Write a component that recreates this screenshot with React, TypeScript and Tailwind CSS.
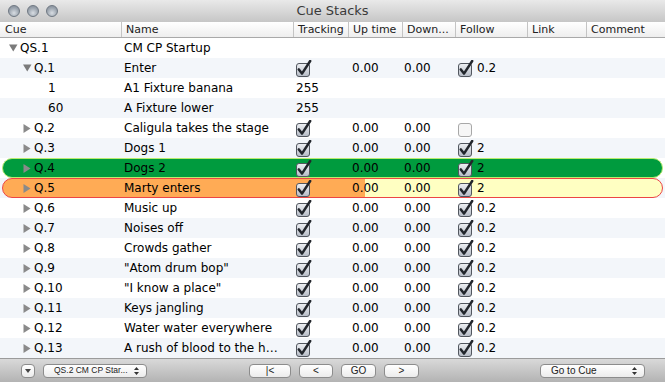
import React from 'react';

type Row = {
  cue: string;
  level: number;
  tri?: 'down' | 'right';
  name: string;
  track?: boolean;
  trackText?: string;
  up?: string;
  down?: string;
  follow?: boolean;
  followVal?: string;
  state?: 'go' | 'next';
};

const rows: Row[] = [
  { cue: 'QS.1', level: 0, tri: 'down', name: 'CM CP Startup' },
  { cue: 'Q.1', level: 1, tri: 'down', name: 'Enter', track: true, up: '0.00', down: '0.00', follow: true, followVal: '0.2' },
  { cue: '1', level: 2, name: 'A1 Fixture banana', trackText: '255' },
  { cue: '60', level: 2, name: 'A Fixture lower', trackText: '255' },
  { cue: 'Q.2', level: 1, tri: 'right', name: 'Caligula takes the stage', track: true, up: '0.00', down: '0.00', follow: false },
  { cue: 'Q.3', level: 1, tri: 'right', name: 'Dogs 1', track: true, up: '0.00', down: '0.00', follow: true, followVal: '2' },
  { cue: 'Q.4', level: 1, tri: 'right', name: 'Dogs 2', track: true, up: '0.00', down: '0.00', follow: true, followVal: '2', state: 'go' },
  { cue: 'Q.5', level: 1, tri: 'right', name: 'Marty enters', track: true, up: '0.00', down: '0.00', follow: true, followVal: '2', state: 'next' },
  { cue: 'Q.6', level: 1, tri: 'right', name: 'Music up', track: true, up: '0.00', down: '0.00', follow: true, followVal: '0.2' },
  { cue: 'Q.7', level: 1, tri: 'right', name: 'Noises off', track: true, up: '0.00', down: '0.00', follow: true, followVal: '0.2' },
  { cue: 'Q.8', level: 1, tri: 'right', name: 'Crowds gather', track: true, up: '0.00', down: '0.00', follow: true, followVal: '0.2' },
  { cue: 'Q.9', level: 1, tri: 'right', name: '"Atom drum bop"', track: true, up: '0.00', down: '0.00', follow: true, followVal: '0.2' },
  { cue: 'Q.10', level: 1, tri: 'right', name: '"I know a place"', track: true, up: '0.00', down: '0.00', follow: true, followVal: '0.2' },
  { cue: 'Q.11', level: 1, tri: 'right', name: 'Keys jangling', track: true, up: '0.00', down: '0.00', follow: true, followVal: '0.2' },
  { cue: 'Q.12', level: 1, tri: 'right', name: 'Water water everywhere', track: true, up: '0.00', down: '0.00', follow: true, followVal: '0.2' },
  { cue: 'Q.13', level: 1, tri: 'right', name: 'A rush of blood to the h…', track: true, up: '0.00', down: '0.00', follow: true, followVal: '0.2' },
];

const cols = 'grid grid-cols-[118px_172px_55px_54px_53px_72px_59px_1fr]';

const Check = ({ on }: { on: boolean }) => (
  <svg width="17" height="17" viewBox="0 0 17 17" className="shrink-0">
    <defs>
      <linearGradient id="cbg" x1="0" y1="0" x2="0" y2="1">
        <stop offset="0" stopColor="#eef0f3" />
        <stop offset="0.5" stopColor="#d3d7de" />
        <stop offset="1" stopColor="#b4bac4" />
      </linearGradient>
    </defs>
    <rect x="1.5" y="3.5" width="13" height="13" rx="2.5" fill={on ? 'url(#cbg)' : '#f6f6f6'} stroke={on ? '#51565e' : '#a8a8a8'} />
    {on && <path d="M3.8 9.4 L7 13.6 L15.2 1" fill="none" stroke="#22262c" strokeWidth="2.5" strokeLinecap="round" strokeLinejoin="round" />}
  </svg>
);

const Tri = ({ dir }: { dir: 'down' | 'right' }) =>
  dir === 'down' ? (
    <svg width="9" height="8" viewBox="0 0 9 8"><path d="M0 0.5 H8.5 L4.25 7.5 Z" fill="#7b7b7b" /></svg>
  ) : (
    <svg width="8" height="9" viewBox="0 0 8 9"><path d="M0.5 0 V9 L7.5 4.5 Z" fill="#8a8a8a" /></svg>
  );

const Btn = ({ label, w }: { label: string; w: string }) => (
  <div className={`${w} h-[14px] rounded-[4px] border border-[#8c8c8c] bg-[linear-gradient(#ffffff,#ececec)] flex items-center justify-center text-[10px] leading-none text-[#222]`}>
    {label}
  </div>
);

const Popup = ({ label, w, size }: { label: string; w: string; size: string }) => (
  <div className={`${w} ${size} h-[14px] rounded-[4px] border border-[#8c8c8c] bg-[linear-gradient(#ffffff,#ececec)] flex items-center justify-between pl-[10px] pr-[7px] leading-none text-[#222]`}>
    <span className="whitespace-nowrap">{label}</span>
    <svg width="5" height="8" viewBox="0 0 5 8" className="shrink-0"><path d="M0 3 L2.5 0 L5 3 Z M0 5 L2.5 8 L5 5 Z" fill="#333" /></svg>
  </div>
);

const Light = () => (
  <div className="w-[12px] h-[12px] rounded-full border border-[#6e7782] bg-[radial-gradient(circle_at_50%_70%,#d8dde3,#9aa3ad_60%,#7f8893)]" />
);

export default function App() {
  return (
    <div className="w-[665px] h-[382px] flex flex-col bg-white overflow-hidden text-black" style={{ fontFamily: '"DejaVu Sans", sans-serif' }}>
      {/* Title bar */}
      <div className="h-[22px] shrink-0 bg-[linear-gradient(#e9e9e9,#c6c6c6)] flex items-center relative">
        <div className="flex gap-[7px] pl-[8px]">
          <Light />
          <Light />
          <Light />
        </div>
        <div className="absolute inset-0 flex items-center justify-center text-[13px] text-[#3a3a3a]">Cue Stacks</div>
      </div>

      {/* Column header */}
      <div className="h-[16px] shrink-0 bg-[linear-gradient(#ffffff,#eeeeee)] border-b border-[#a9a9a9] grid grid-cols-[121px_172px_55px_54px_53px_72px_59px_1fr] text-[11px] leading-[15px] text-[#222]">
        {['Cue', 'Name', 'Tracking', 'Up time', 'Down...', 'Follow', 'Link', 'Comment'].map((h, i) => (
          <div key={h} className={`flex items-center ${i > 0 ? 'border-l border-[#c4c4c4] pl-[4px]' : 'pl-[5px]'} whitespace-nowrap overflow-hidden`}>
            {h}
          </div>
        ))}
      </div>

      {/* Rows */}
      <div className="flex-1 text-[12px]">
        {rows.map((r, i) => {
          const stripe = i % 2 === 1 ? 'bg-[#f3f6fa]' : 'bg-white';
          const hi =
            r.state === 'go'
              ? 'rounded-full border-[#b9ec6f] bg-[#009b3e]'
              : r.state === 'next'
              ? 'rounded-full border-[#ec4545] bg-[linear-gradient(to_right,#ffab55_362px,#ffffc2_362px)]'
              : 'border-transparent';
          const pad = r.level === 0 ? 'pl-[6px]' : r.level === 1 ? 'pl-[20px]' : 'pl-[34px]';
          return (
            <div key={i} className={`h-[20px] ${stripe}`}>
              <div className={`h-[20px] mx-[2px] border ${hi} ${cols} items-center leading-[18px]`}>
                <div className={`flex items-center ${pad}`}>
                  <span className="w-[11px] flex items-center">{r.tri && <Tri dir={r.tri} />}</span>
                  <span>{r.cue}</span>
                </div>
                <div className="pl-[3px] whitespace-nowrap overflow-hidden">{r.name}</div>
                <div className="pl-[2px] flex items-center">
                  {r.track && <Check on />}
                  {r.trackText && <span className="pl-[1px]">{r.trackText}</span>}
                </div>
                <div className="pl-[4px]">{r.up}</div>
                <div className="pl-[2px]">{r.down}</div>
                <div className="pl-[2px] flex items-center">
                  {r.follow !== undefined && <Check on={r.follow} />}
                  {r.followVal && <span className="pl-[3px]">{r.followVal}</span>}
                </div>
                <div />
                <div />
              </div>
            </div>
          );
        })}
      </div>

      {/* Bottom bar */}
      <div
        className="h-[24px] shrink-0 border-t border-[#9b9b9b] bg-[linear-gradient(#d9d9d9,#b3b3b3)] flex items-center pl-[21px] pr-[20px]"
        style={{ fontFamily: '"Liberation Sans", sans-serif' }}
      >
        <div className="w-[14px] h-[14px] rounded-[4px] border border-[#8c8c8c] bg-[linear-gradient(#ffffff,#ececec)] flex items-center justify-center">
          <svg width="6" height="4" viewBox="0 0 6 4"><path d="M0 0 H6 L3 4 Z" fill="#444" /></svg>
        </div>
        <div className="ml-[8px]">
          <Popup label="QS.2 CM CP Star..." w="w-[104px]" size="text-[8.5px]" />
        </div>
        <div className="ml-[102px] flex gap-[8px]">
          <Btn label="|<" w="w-[42px]" />
          <Btn label="<" w="w-[34px]" />
          <Btn label="GO" w="w-[35px]" />
          <Btn label=">" w="w-[35px]" />
        </div>
        <div className="ml-auto">
          <Popup label="Go to Cue" w="w-[105px]" size="text-[10px]" />
        </div>
      </div>
    </div>
  );
}
